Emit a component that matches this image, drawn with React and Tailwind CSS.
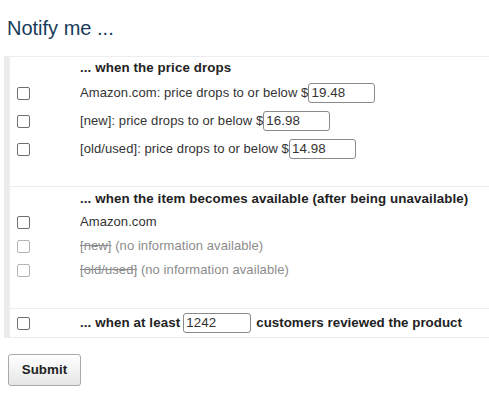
// "Notify me" alert form: price drops, availability and review count triggers.

const FONT = { fontFamily: '"Liberation Sans", Arial, sans-serif' }

function Box({ disabled }) {
  return (
    <span
      className={`block w-[13px] h-[13px] rounded-[2px] border bg-white ${
        disabled ? 'border-[#b4b4b4]' : 'border-[#6f6f6f]'
      }`}
    />
  )
}

function Field({ value, w = 'w-[67px]' }) {
  return (
    <span
      className={`inline-flex items-center h-[20px] ${w} border border-[#8a8a8a] rounded-[3px] bg-white pl-[2px] text-[13.33px] text-[#333] align-middle`}
    >
      {value}
    </span>
  )
}

function Row({ h = 'h-[28px]', disabled, children }) {
  return (
    <div className={`grid grid-cols-[70px_1fr] items-center ${h}`}>
      <div className="pl-[7px]">
        <Box disabled={disabled} />
      </div>
      <div className="flex items-center whitespace-nowrap">{children}</div>
    </div>
  )
}

function Heading({ children, h = 'h-[22px]' }) {
  return (
    <div className={`grid grid-cols-[70px_1fr] items-center ${h}`}>
      <div />
      <div className="text-[13.33px] font-bold tracking-[0.1px] text-[#222] whitespace-nowrap">{children}</div>
    </div>
  )
}

const PRICES = [
  { label: 'Amazon.com: price drops to or below $', value: '19.48' },
  { label: '[new]: price drops to or below $', value: '16.98' },
  { label: '[old/used]: price drops to or below $', value: '14.98' },
]

export default function App() {
  return (
    <div className="w-[489px] h-[403px] bg-white text-[13px] tracking-[0.08px] text-[#333]" style={FONT}>
      <h1 className="pt-[16px] pl-[7px] text-[20px] leading-[24px] tracking-normal text-[#173a5a]">Notify me ...</h1>

      <div className="mt-[16px] ml-[4px] border-l-[6px] border-l-[#ececec] border-t border-b border-[#ececec]">
        {/* price drops */}
        <div className="pb-[23px]">
          <Heading>... when the price drops</Heading>
          {PRICES.map((p) => (
            <Row key={p.label}>
              <span>{p.label}</span>
              <Field value={p.value} />
            </Row>
          ))}
        </div>

        {/* availability */}
        <div className="border-t border-[#ececec] pb-[26px]">
          <Heading h="h-[23px]">... when the item becomes available (after being unavailable)</Heading>
          <Row h="h-[24px]">
            <span>Amazon.com</span>
          </Row>
          <Row h="h-[24px]" disabled>
            <span className="text-[#8c8c8c]">
              <span className="line-through">[new]</span> (no information available)
            </span>
          </Row>
          <Row h="h-[24px]" disabled>
            <span className="text-[#8c8c8c]">
              <span className="line-through">[old/used]</span> (no information available)
            </span>
          </Row>
        </div>

        {/* reviews */}
        <div className="border-t border-[#ececec]">
          <Row>
            <span className="text-[13.33px] font-bold tracking-[0.1px] text-[#222] mr-[3px]">... when at least</span>
            <Field value="1242" w="w-[68px]" />
            <span className="text-[13.33px] font-bold tracking-[0.02px] text-[#222] ml-[5px]">customers reviewed the product</span>
          </Row>
        </div>
      </div>

      <button
        type="button"
        className="mt-[16px] ml-[8px] w-[73px] h-[32px] rounded-[3px] border border-[#a9a9a9] bg-gradient-to-b from-white to-[#e6e6e6] text-[13.33px] font-bold text-[#222]"
        style={FONT}
      >
        Submit
      </button>
    </div>
  )
}
